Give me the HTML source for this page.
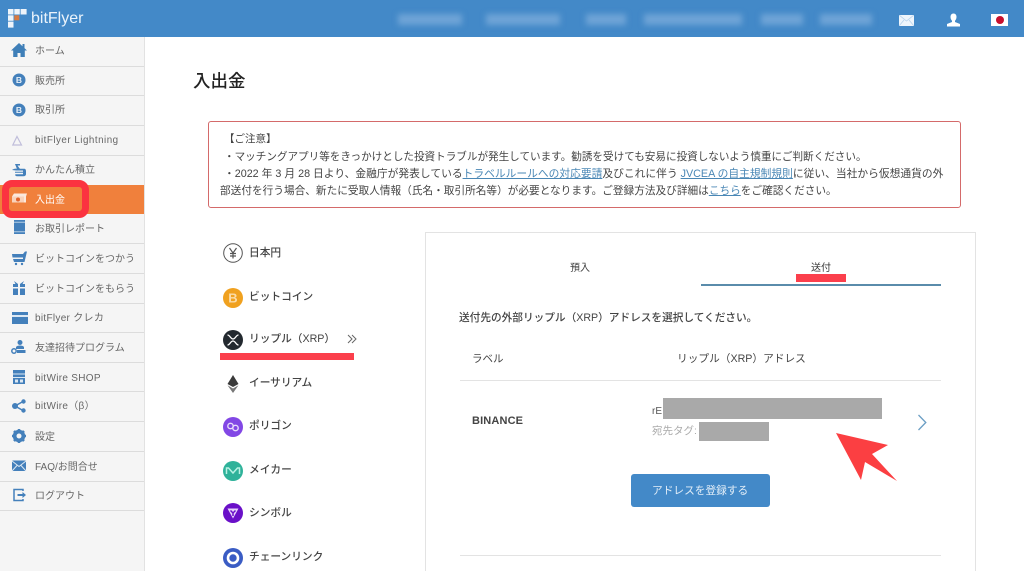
<!DOCTYPE html>
<html lang="ja"><head><meta charset="utf-8"><title>入出金</title>
<style>
html,body{margin:0;padding:0;background:#fff}
#p{position:relative;width:1024px;height:571px;overflow:hidden;background:#fff;font-family:"Liberation Sans","Noto Sans CJK JP",sans-serif;color:#333}
#p div,#p svg{position:absolute}
.t{white-space:nowrap;line-height:14px}
.m{left:35px;font-size:10px;color:#666}
.l{letter-spacing:.3px}
.r{left:0;width:144px;height:1px;background:#dcdcdc}
.c{left:249px;font-size:10.7px;color:#444;font-weight:500}
.n{color:#444;line-height:18px;white-space:nowrap}
a{color:#4a87b5;text-decoration:underline}
.i{left:11px;width:16px;height:16px}
.o{left:223px;width:20px;height:20px}
.b{height:11px;background:#6ea3d6;filter:blur(3px);top:14px}
</style></head><body><div id="p">
<div style="left:0;top:0;width:1024px;height:37px;background:#4389c8"></div>
<svg style="left:8px;top:9px" width="20" height="20"><g fill="#eef4fa"><rect width="5.500" height="5.500"/><rect x="6.300" width="5.500" height="5.500"/><rect x="12.600" width="6" height="5.500"/><rect y="6.300" width="5.500" height="5.500"/><rect y="12.600" width="5.500" height="6"/></g><rect x="6.300" y="6.300" width="5" height="5" fill="#d9793f"/></svg>
<div class="t" style="left:31px;top:10px;font-size:16px;line-height:18px;color:#eaf3fb">bitFlyer</div>
<div class="b" style="left:398px;width:64px"></div>
<div class="b" style="left:486px;width:74px"></div>
<div class="b" style="left:586px;width:40px"></div>
<div class="b" style="left:644px;width:98px"></div>
<div class="b" style="left:761px;width:42px"></div>
<div class="b" style="left:820px;width:52px"></div>
<svg style="left:899px;top:15px" width="15" height="11"><rect width="15" height="11" fill="#eef5fc"/><path d="M0 0l7.500 6L15 0M0 11l5-6M15 11l-5-6" fill="none" stroke="#b7d2ec" stroke-width=".8"/></svg>
<svg style="left:946px;top:12px" width="15" height="15"><path d="M7.500 1.500c2 0 3 1.500 3 3.500 0 1.800-.8 3-1.500 3.800v1.200l5 2V14.500H1v-2.500l5-2V8.800c-.7-.8-1.500-2-1.500-3.800 0-2 1-3.500 3-3.500z" fill="#fff"/></svg>
<div style="left:991px;top:14px;width:17px;height:12px;background:#fff"></div>
<div style="left:996px;top:16px;width:8px;height:8px;background:#c8102e;border-radius:50%"></div>

<div style="left:0;top:37px;width:144px;height:534px;background:#f5f5f5;border-right:1px solid #e2e2e2"></div>
<div class="r" style="top:66px"></div><div class="r" style="top:95px"></div><div class="r" style="top:125px"></div><div class="r" style="top:155px"></div>
<div class="r" style="top:243px"></div><div class="r" style="top:273px"></div><div class="r" style="top:303px"></div><div class="r" style="top:332px"></div><div class="r" style="top:362px"></div><div class="r" style="top:391px"></div><div class="r" style="top:421px"></div><div class="r" style="top:451px"></div><div class="r" style="top:481px"></div><div class="r" style="top:510px"></div>
<div style="left:0;top:185px;width:144px;height:29px;background:#f0803c"></div>
<div style="left:2px;top:180px;width:73px;height:24px;border:7px solid #fb3340;border-radius:10px"></div>

<svg class="i" style="top:42px" viewBox="0 0 16 16"><path d="M8 1L0 8.500h2.200V15h4.300v-4h3v4h4.300V8.500H16l-2.500-2.400V2h-2v2.200z" fill="#3f7fb8"/></svg>
<div class="t m" style="top:45px">ホーム</div>
<svg class="i" style="top:72px" viewBox="0 0 16 16"><circle cx="8" cy="8" r="6.500" fill="#4480bb"/><text x="8" y="11" font-size="8.500" font-weight="bold" text-anchor="middle" fill="#e6eff7" font-family="Liberation Sans">B</text></svg>
<div class="t m" style="top:75px">販売所</div>
<svg class="i" style="top:102px" viewBox="0 0 16 16"><circle cx="8" cy="8" r="6.500" fill="#4480bb"/><text x="8" y="11" font-size="8.500" font-weight="bold" text-anchor="middle" fill="#e6eff7" font-family="Liberation Sans">B</text></svg>
<div class="t m" style="top:104px">取引所</div>
<svg style="left:11px;top:133px" width="16" height="16" viewBox="0 0 16 16"><path d="M6 3.500L10.500 12H1.800z" fill="none" stroke="#c0bedb" stroke-width="1.200"/></svg>
<div class="t m l" style="top:134px;font-size:9.800px;letter-spacing:.5px">bitFlyer Lightning</div>
<svg class="i" style="top:162px" viewBox="0 0 16 16"><path d="M4 2h5v1.500H6.500L9 7H6zM1 8c2-1.500 4-1.500 5-1.200h7c1.500 0 2 1 2 2.500v3c0 1-1 2-2.500 2H6c-2 0-2-2-1.500-2H12v-1.500H4v-1h8V8.500H5z" fill="#4480bb"/></svg>
<div class="t m" style="top:164px">かんたん積立</div>
<svg class="i" style="top:191px" viewBox="0 0 16 16"><path d="M3 2.500h13l-1 3v6H1V5.500z" fill="#fbe9dd"/><rect x="1" y="5.500" width="12" height="6" fill="#f9d3bb"/><circle cx="7" cy="8.500" r="2" fill="#e2622c"/></svg>
<div class="t m" style="top:194px;color:#fff">入出金</div>
<svg class="i" style="top:219px" viewBox="0 0 16 16"><rect x="3" y="1" width="11" height="14" fill="#4480bb"/><rect x="3" y="2.800" width="11" height=".8" fill="#cfe0ef"/><rect x="3" y="12.400" width="11" height=".8" fill="#cfe0ef"/></svg>
<div class="t m" style="top:223px">お取引レポート</div>
<svg class="i" style="top:250px" viewBox="0 0 16 16"><path d="M1 4h11l2-2.500h2L13.500 12H3L2 9h10V7.500H1.500z" fill="#4480bb"/><circle cx="5" cy="14" r="1.200" fill="#4480bb"/><circle cx="11" cy="14" r="1.200" fill="#4480bb"/></svg>
<div class="t m" style="top:253px">ビットコインをつかう</div>
<svg class="i" style="top:280px" viewBox="0 0 16 16"><path d="M2 4h5v3H2zM9 4h5v3H9zM2 8.500h5V15H2zM9 8.500h5V15H9zM3 1l4 3H4.500zM13 1L9 4h2.500z" fill="#4480bb"/></svg>
<div class="t m" style="top:283px">ビットコインをもらう</div>
<svg class="i" style="top:310px;left:12px" viewBox="0 0 16 16"><rect y="2" width="16" height="12" fill="#4480bb"/><rect y="5" width="16" height="2" fill="#dce8f3"/></svg>
<div class="t m l" style="top:312px">bitFlyer クレカ</div>
<svg class="i" style="top:339px" viewBox="0 0 16 16"><circle cx="9" cy="3.500" r="2.500" fill="#4480bb"/><path d="M5 8c1-2 7-2 8 0v2H5z" fill="#4480bb"/><circle cx="3" cy="12" r="2.200" fill="none" stroke="#4480bb" stroke-width="1.500"/><path d="M6 11h8.500v3H6z" fill="#4480bb"/></svg>
<div class="t m" style="top:342px">友達招待プログラム</div>
<svg class="i" style="top:369px" viewBox="0 0 16 16"><rect x="2" y="1" width="12" height="14" fill="#4480bb"/><rect x="2" y="4.500" width="12" height="1" fill="#dce8f3"/><rect x="2" y="8" width="12" height="1" fill="#dce8f3"/><rect x="4" y="10.500" width="3" height="3" fill="#dce8f3"/><rect x="9" y="10.500" width="3" height="3" fill="#dce8f3"/></svg>
<div class="t m l" style="top:372px">bitWire SHOP</div>
<svg class="i" style="top:398px" viewBox="0 0 16 16"><path d="M12 3.500L4 8l8 4.500" fill="none" stroke="#4480bb" stroke-width="1.500"/><circle cx="4" cy="8" r="3" fill="#4480bb"/><circle cx="12.500" cy="3.500" r="2.200" fill="#4480bb"/><circle cx="12.500" cy="12.500" r="2.200" fill="#4480bb"/></svg>
<div class="t m l" style="top:400px">bitWire（β）</div>
<svg class="i" style="top:428px" viewBox="0 0 16 16"><circle cx="8" cy="8" r="4.500" fill="none" stroke="#4480bb" stroke-width="3.500"/><path d="M8 1v14M1 8h14M3 3l10 10M13 3L3 13" stroke="#4480bb" stroke-width="2.500"/><circle cx="8" cy="8" r="2.500" fill="#f5f5f5"/></svg>
<div class="t m" style="top:431px">設定</div>
<svg class="i" style="top:458px" viewBox="0 0 16 16"><rect x="1" y="2.500" width="14" height="10.500" rx="1" fill="#4480bb"/><path d="M1 3l7 5.500L15 3M1 13l5-5.500M15 13l-5-5.500" fill="none" stroke="#dce8f3" stroke-width="1"/></svg>
<div class="t m" style="top:461px">FAQ/お問合せ</div>
<svg class="i" style="top:487px" viewBox="0 0 16 16"><path d="M12 4V2.500H3v11h9V12" fill="none" stroke="#4480bb" stroke-width="1.500"/><path d="M6.500 7h5V5l3.500 3-3.500 3V9h-5z" fill="#4480bb"/></svg>
<div class="t m" style="top:490px">ログアウト</div>

<div class="t" style="left:193px;top:71px;font-size:17.500px;line-height:21px;color:#222;font-weight:500">入出金</div>
<div style="left:208px;top:121px;width:751px;height:85px;border:1px solid #d46a6a;border-radius:3px"></div>
<div class="n" style="left:224px;top:130px;font-size:10.500px">【ご注意】</div>
<div class="n" style="left:224px;top:148px;font-size:10.580px">・マッチングアプリ等をきっかけとした投資トラブルが発生しています。勧誘を受けても安易に投資しないよう慎重にご判断ください。</div>
<div class="n" style="left:224px;top:165px;font-size:10.750px">・2022 年 3 月 28 日より、金融庁が発表している<a>トラベルルールへの対応要請</a>及びこれに伴う <a>JVCEA の自主規制規則</a>に従い、当社から仮想通貨の外</div>
<div class="n" style="left:220px;top:182px;font-size:10.660px">部送付を行う場合、新たに受取人情報（氏名・取引所名等）が必要となります。ご登録方法及び詳細は<a>こちら</a>をご確認ください。</div>

<svg class="o" style="top:243px" viewBox="0 0 20 20"><circle cx="10" cy="10" r="9.300" fill="#fff" stroke="#555" stroke-width="1"/><path d="M6.500 5L10 10l3.500-5M10 10v5.500M7 10.500h6M7 13h6" fill="none" stroke="#555" stroke-width="1.200"/></svg>
<div class="t c" style="top:246px">日本円</div>
<svg class="o" style="top:288px" viewBox="0 0 20 20"><circle cx="10" cy="10" r="10" fill="#f0a11f"/><text x="10" y="14.500" font-size="13" font-weight="bold" text-anchor="middle" fill="#fbdca8" font-family="Liberation Sans">B</text></svg>
<div class="t c" style="top:290px">ビットコイン</div>
<svg class="o" style="top:330px" viewBox="0 0 20 20"><circle cx="10" cy="10" r="10" fill="#23292f"/><path d="M4.500 5c2.500 0 3 4 5.500 4s3-4 5.500-4M4.500 15c2.500 0 3-4 5.500-4s3 4 5.500 4" fill="none" stroke="#fff" stroke-width="1.300"/></svg>
<div class="t c" style="top:332px">リップル（XRP）</div>
<svg style="left:347px;top:334px" width="10" height="10"><path d="M1 1l4 4-4 4M5 1l4 4-4 4" fill="none" stroke="#666" stroke-width="1"/></svg>
<div style="left:220px;top:353px;width:134px;height:7px;background:#fb3f4c"></div>
<svg class="o" style="top:374px" viewBox="0 0 20 20"><path d="M10 1L4.500 10 10 13l5.500-3z" fill="#3a3a3a"/><path d="M10 14.500L4.500 11.300 10 19l5.500-7.700z" fill="#777"/></svg>
<div class="t c" style="top:376px">イーサリアム</div>
<svg class="o" style="top:417px" viewBox="0 0 20 20"><circle cx="10" cy="10" r="10" fill="#8247e5"/><circle cx="7.500" cy="9" r="2.700" fill="none" stroke="#e8dcfa" stroke-width="1.400"/><circle cx="12.500" cy="11" r="2.700" fill="none" stroke="#e8dcfa" stroke-width="1.400"/></svg>
<div class="t c" style="top:419px">ポリゴン</div>
<svg class="o" style="top:461px" viewBox="0 0 20 20"><circle cx="10" cy="10" r="10" fill="#2fb29a"/><path d="M3.500 13V7l2 0 4.500 5 4.500-5 2 0v6" fill="none" stroke="#b9f2e4" stroke-width="1.500"/></svg>
<div class="t c" style="top:463px">メイカー</div>
<svg class="o" style="top:503px" viewBox="0 0 20 20"><circle cx="10" cy="10" r="10" fill="#6a10c8"/><path d="M4.500 5.500h11L10 15.500z" fill="#e6d2fa"/><path d="M7.500 7.500L10 10l2.500-2.500M10 10v3" fill="none" stroke="#6a10c8" stroke-width="1.500"/></svg>
<div class="t c" style="top:506px">シンボル</div>
<svg class="o" style="top:548px" viewBox="0 0 20 20"><circle cx="10" cy="10" r="10" fill="#3a5cc4"/><circle cx="10" cy="10" r="5" fill="#3a5cc4"/><circle cx="10" cy="10" r="5" fill="none" stroke="#fff" stroke-width="2.600"/></svg>
<div class="t c" style="top:550px">チェーンリンク</div>

<div style="left:425px;top:232px;width:551px;height:345px;border:1px solid #e3e3e3;box-sizing:border-box"></div>
<div class="t" style="left:570px;top:262px;font-size:10px;color:#444">預入</div>
<div class="t" style="left:811px;top:262px;font-size:10px;color:#333">送付</div>
<div style="left:701px;top:284px;width:240px;height:2px;background:#5a8cab"></div>
<div style="left:796px;top:274px;width:50px;height:8px;background:#fb3f4c"></div>
<div class="t" style="left:459px;top:311px;font-size:10.660px;color:#444;font-weight:500">送付先の外部リップル（XRP）アドレスを選択してください。</div>
<div class="t" style="left:472px;top:352px;font-size:10.500px;color:#444">ラベル</div>
<div class="t" style="left:677px;top:352px;font-size:10.700px;color:#444">リップル（XRP）アドレス</div>
<div style="left:460px;top:380px;width:481px;height:1px;background:#e3e3e3"></div>
<div class="t" style="left:472px;top:414px;font-size:11px;font-weight:bold;color:#444;letter-spacing:.15px">BINANCE</div>
<div class="t" style="left:652px;top:405px;font-size:10px;color:#555">rE</div>
<div style="left:663px;top:398px;width:219px;height:21px;background:#a9a9a9"></div>
<div class="t" style="left:652px;top:424px;font-size:10.500px;color:#aaa">宛先タグ:</div>
<div style="left:699px;top:422px;width:70px;height:19px;background:#a9a9a9"></div>
<svg style="left:917px;top:414px" width="11" height="17"><path d="M1.500 1l7.300 7.500L1.500 16" fill="none" stroke="#6b9ec4" stroke-width="1.300"/></svg>
<svg style="left:830px;top:428px" width="72" height="58"><path d="M6 5L58 17 42 26 67 53 35 34 31 52z" fill="#fb3f42"/></svg>
<div style="left:631px;top:474px;width:139px;height:33px;background:#4389c8;border-radius:3px"></div>
<div class="t" style="left:652px;top:484px;font-size:10.700px;color:#e3eef8">アドレスを登録する</div>
<div style="left:460px;top:555px;width:481px;height:1px;background:#e3e3e3"></div>
</div></body></html>
